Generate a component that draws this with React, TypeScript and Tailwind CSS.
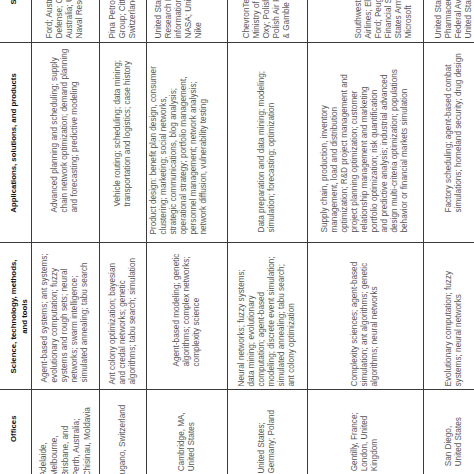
import React from "react";

type Cell = { lines: string[]; cls?: string };
type Row = { h: string; offices: Cell; science: Cell; apps: Cell; customers: Cell };

// table is laid out in its original (unrotated) orientation and then turned a quarter
const rows: Row[] = [
  {
    h: "h-[68px]",
    offices: { lines: ["Adelaide,", "Melbourne,", "Brisbane, and", "Perth, Australia;", "Chisinau, Moldavia"], cls: "leading-[11px]" },
    science: {
      lines: [
        "Agent-based systems; ant systems;",
        "evolutionary computation; fuzzy",
        "systems and rough sets; neural",
        "networks; swarm intelligence;",
        "simulated annealing; tabu search",
      ],
      cls: "pl-[7px]",
    },
    apps: {
      lines: [
        "Advanced planning and scheduling; supply",
        "chain network optimization; demand planning",
        "and forecasting; predictive modeling",
      ],
      cls: "pl-[30px]",
    },
    customers: {
      lines: ["Ford; Australian Department of", "Defense; Commonwealth Bank of", "Australia; United States Office of", "Naval Research"],
      cls: "pl-[4px]",
    },
  },
  {
    h: "h-[47px]",
    offices: { lines: ["Lugano, Switzerland"] },
    science: {
      lines: ["Ant colony optimization; bayesian", "and credal networks; genetic", "algorithms; tabu search; simulation"],
      cls: "pl-[5px]",
    },
    apps: {
      lines: ["Vehicle routing; scheduling; data mining;", "transportation and logistics; case history"],
      cls: "pl-[36px]",
    },
    customers: { lines: ["Pina Petroli; Migros", "Group; Città di Lugano,", "Switzerland"], cls: "pl-[4px]" },
  },
  {
    h: "h-[81px]",
    offices: { lines: ["Cambridge, MA,", "United States"] },
    science: {
      lines: ["Agent-based modeling; genetic", "algorithms; complex networks;", "complexity science"],
      cls: "pl-[23px]",
    },
    apps: {
      lines: [
        "Product design: benefit plan design, consumer",
        "clustering; marketing; social networks,",
        "strategic communications, blog analysis;",
        "operational strategy; portfolio management,",
        "personnel management; network analysis;",
        "network diffusion, vulnerability testing",
      ],
      cls: "pl-[8px] pb-[16px]",
    },
    customers: {
      lines: ["United States Army", "Research Laboratory;", "information agencies;", "NASA; Unilever;", "Nike"],
      cls: "pl-[4px] pb-[16px]",
    },
  },
  {
    h: "h-[80px]",
    offices: { lines: ["United States;", "Germany; Poland"] },
    science: {
      lines: [
        "Neural networks; fuzzy systems;",
        "data mining; evolutionary",
        "computation; agent-based",
        "modeling; discrete event simulation;",
        "simulated annealing; tabu search;",
        "ant colony optimization",
      ],
      cls: "pl-[3px]",
    },
    apps: {
      lines: ["Data preparation and data mining; modeling;", "simulation; forecasting; optimization"],
      cls: "pl-[10px]",
    },
    customers: {
      lines: ["ChevronTexaco; Polish", "Ministry of Defence;", "Oxy; Polish Navy;", "Polish Air Force; Procter", "& Gamble"],
      cls: "pl-[4px]",
    },
  },
  {
    h: "h-[116px]",
    offices: { lines: ["Gentilly, France;", "London, United", "Kingdom"] },
    science: {
      lines: ["Complexity sciences; agent-based", "simulation; ant algorithms; genetic", "algorithms; neural networks"],
      cls: "pl-[3px]",
    },
    apps: {
      lines: [
        "Supply chain, production, inventory",
        "management, load and distribution",
        "optimization; R&D project management and",
        "project planning optimization; customer",
        "relationship management and marketing",
        "portfolio optimization; risk quantification",
        "and predictive analysis; industrial advanced",
        "design multi-criteria optimization; populations",
        "behavior or financial markets simulation",
      ],
      cls: "pl-[10px]",
    },
    customers: {
      lines: ["Southwest", "Airlines; Eli Lilly;", "Ford; Peugeot; Cap Gemini", "Financial Services; United", "States Army;", "Microsoft"],
      cls: "pl-[4px] pt-[38px]",
    },
  },
  {
    h: "h-[62px]",
    offices: { lines: ["San Diego,", "United States"] },
    science: { lines: ["Evolutionary computation; fuzzy", "systems; neural networks"], cls: "pl-[3px]" },
    apps: {
      lines: ["Factory scheduling; agent-based combat", "simulations; homeland security; drug design"],
      cls: "pl-[30px]",
    },
    customers: {
      lines: ["United States Navy;", "Pharmaceutical", "Federal Aviation", "United States Air Force"],
      cls: "pl-[4px]",
    },
  },
];

const Lines = ({ lines }: { lines: string[] }) => (
  <>
    {lines.map((l, i) => (
      <div key={i} className="whitespace-nowrap">
        {l}
      </div>
    ))}
  </>
);

export default function App() {
  return (
    <div className="w-[474px] h-[474px] overflow-hidden bg-white font-['Liberation_Sans',Arial,sans-serif]">
      <div className="w-[600px] origin-top-left translate-y-[493px] -rotate-90">
        <table className="table-fixed border-collapse w-[600px]">
          <colgroup>
            <col className="w-[103px]" />
            <col className="w-[147px]" />
            <col className="w-[200px]" />
            <col className="w-[150px]" />
          </colgroup>
          <thead>
            <tr className="h-[31px] text-[7.8px] leading-[10.5px] font-bold text-[#111]">
              <th className="align-top pt-[9px] pl-[26px] text-center border-b border-r border-[#3a3a3a]">Offices</th>
              <th className="align-top pt-[9px] text-center border-b border-r border-[#3a3a3a]">
                Science, technology, methods,
                <br />
                and tools
              </th>
              <th className="align-top pt-[9px] text-center border-b border-r border-[#3a3a3a]">
                Applications, solutions, and products
              </th>
              <th className="align-top pt-[9px] text-center border-b border-[#3a3a3a]">Selected customers</th>
            </tr>
          </thead>
          <tbody className="text-[8.2px] leading-[10px] text-[#575757]">
            {rows.map((r, i) => (
              <tr key={i} className={r.h}>
                <td className={`p-0 align-middle text-center border-b border-r border-[#3a3a3a] ${r.offices.cls ?? ""}`}>
                  <div className="inline-block text-left">
                    <Lines lines={r.offices.lines} />
                  </div>
                </td>
                <td className={`p-0 align-middle text-left border-b border-r border-[#3a3a3a] ${r.science.cls ?? ""}`}>
                  <Lines lines={r.science.lines} />
                </td>
                <td className={`p-0 align-middle text-left border-b border-r border-[#3a3a3a] ${r.apps.cls ?? ""}`}>
                  <Lines lines={r.apps.lines} />
                </td>
                <td className={`p-0 align-middle text-left border-b border-[#3a3a3a] overflow-hidden ${r.customers.cls ?? ""}`}>
                  <Lines lines={r.customers.lines} />
                </td>
              </tr>
            ))}
          </tbody>
        </table>
      </div>
    </div>
  );
}
